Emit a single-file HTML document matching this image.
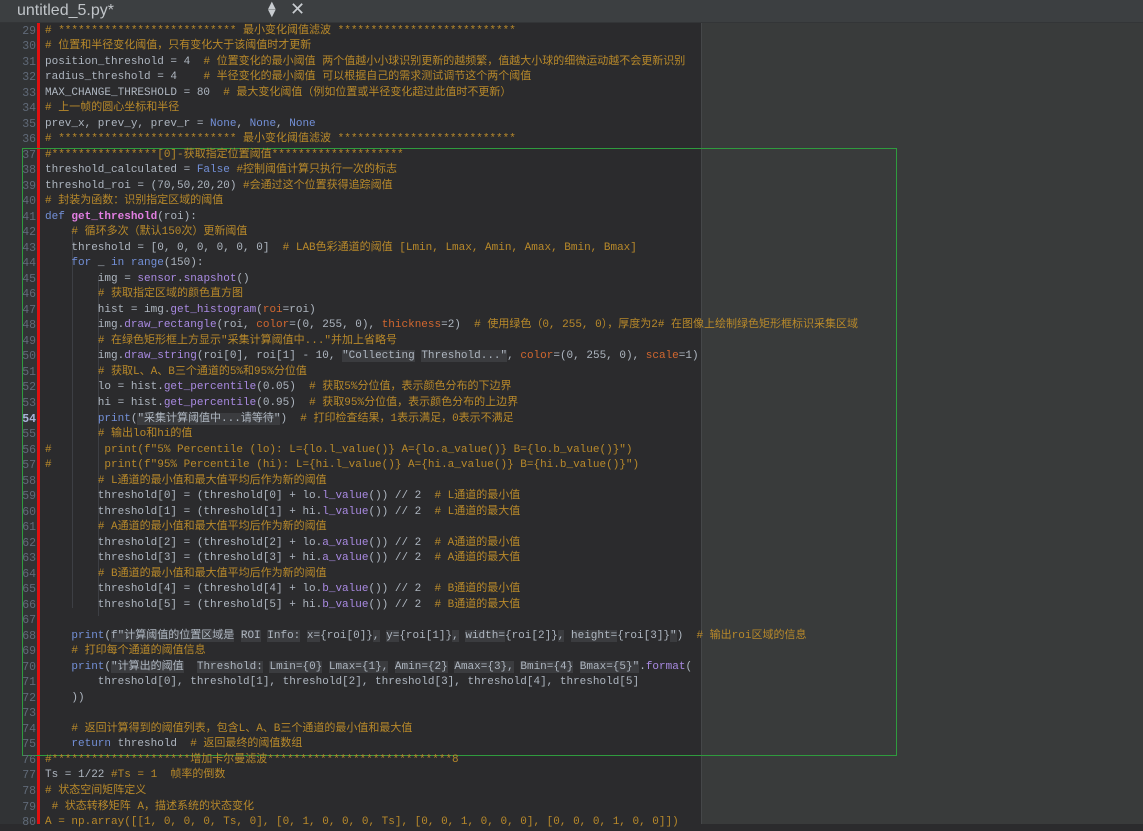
<!DOCTYPE html>
<html><head><meta charset="utf-8"><style>
body{margin:0;width:1143px;height:824px;overflow:hidden;background:#2b2b2d;font-family:"Liberation Mono","Noto Sans CJK SC",monospace;}
#top{position:absolute;left:0;top:0;width:1143px;height:22px;background:#3c3f41;border-bottom:1px solid #333537;}
#title{position:absolute;left:17px;top:0px;font:16px "Liberation Sans",sans-serif;color:#c0c4c8;line-height:22px;}
#gutter{position:absolute;left:0;top:23px;width:38px;height:801px;background:#313335;}
#red{position:absolute;left:37px;top:23px;width:3px;height:801px;background:#e01010;}
#rm{position:absolute;left:701px;top:23px;width:442px;height:801px;background:#393b3b;border-left:1px solid #454749;}
#green{position:absolute;left:22px;top:148px;width:873px;height:606px;border:1px solid #2f9b3e;}
.ln{position:absolute;left:0;width:36px;text-align:right;font-size:11.5px;color:#606a78;}
.cl{position:absolute;left:45px;font-size:11px;white-space:pre;color:#aeb6c0;}
.c{color:#b8892a}.k{color:#7390d8}.f{color:#e27fe2;font-weight:bold}.m{color:#a98ae2}.a{color:#d2672f}.s{background:#3b3c3f}
.g{position:absolute;width:1px;background:#3d3f44;}
</style></head><body>
<div id="top"><div id="title">untitled_5.py*</div>
<div style="position:absolute;left:268px;top:2px;color:#c8ccd0;font:10px 'DejaVu Sans',sans-serif;line-height:8px">▲<br>▼</div>
<div style="position:absolute;left:290px;top:0;color:#c8ccd0;font:18px 'DejaVu Sans',sans-serif;line-height:20px">✕</div></div>
<div id="gutter"></div>
<div id="rm"></div>
<div id="red"></div>
<div class="g" style="left:72px;top:228px;height:380px"></div>
<div class="g" style="left:98px;top:276px;height:340px"></div>
<div id="green"></div>
<div id="code"></div>
<script>
const L=[
'<span class=c># *************************** 最小变化阈值滤波 ***************************</span>',
'<span class=c># 位置和半径变化阈值，只有变化大于该阈值时才更新</span>',
'position_threshold = 4  <span class=c># 位置变化的最小阈值 两个值越小小球识别更新的越频繁，值越大小球的细微运动越不会更新识别</span>',
'radius_threshold = 4    <span class=c># 半径变化的最小阈值 可以根据自己的需求测试调节这个两个阈值</span>',
'MAX_CHANGE_THRESHOLD = 80  <span class=c># 最大变化阈值（例如位置或半径变化超过此值时不更新）</span>',
'<span class=c># 上一帧的圆心坐标和半径</span>',
'prev_x, prev_y, prev_r = <span class=k>None</span>, <span class=k>None</span>, <span class=k>None</span>',
'<span class=c># *************************** 最小变化阈值滤波 ***************************</span>',
'<span class=c>#****************[0]-获取指定位置阈值********************</span>',
'threshold_calculated = <span class=k>False</span> <span class=c>#控制阈值计算只执行一次的标志</span>',
'threshold_roi = (70,50,20,20) <span class=c>#会通过这个位置获得追踪阈值</span>',
'<span class=c># 封装为函数：识别指定区域的阈值</span>',
'<span class=k>def</span> <span class=f>get_threshold</span>(roi):',
'    <span class=c># 循环多次（默认150次）更新阈值</span>',
'    threshold = [0, 0, 0, 0, 0, 0]  <span class=c># LAB色彩通道的阈值 [Lmin, Lmax, Amin, Amax, Bmin, Bmax]</span>',
'    <span class=k>for</span> _ <span class=k>in</span> <span class=k>range</span>(150):',
'        img = <span class=m>sensor</span>.<span class=m>snapshot</span>()',
'        <span class=c># 获取指定区域的颜色直方图</span>',
'        hist = img.<span class=m>get_histogram</span>(<span class=a>roi</span>=roi)',
'        img.<span class=m>draw_rectangle</span>(roi, <span class=a>color</span>=(0, 255, 0), <span class=a>thickness</span>=2)  <span class=c># 使用绿色（0, 255, 0），厚度为2# 在图像上绘制绿色矩形框标识采集区域</span>',
'        <span class=c># 在绿色矩形框上方显示"采集计算阈值中..."并加上省略号</span>',
'        img.<span class=m>draw_string</span>(roi[0], roi[1] - 10, <span class=s>"Collecting</span> <span class=s>Threshold..."</span>, <span class=a>color</span>=(0, 255, 0), <span class=a>scale</span>=1)',
'        <span class=c># 获取L、A、B三个通道的5%和95%分位值</span>',
'        lo = hist.<span class=m>get_percentile</span>(0.05)  <span class=c># 获取5%分位值，表示颜色分布的下边界</span>',
'        hi = hist.<span class=m>get_percentile</span>(0.95)  <span class=c># 获取95%分位值，表示颜色分布的上边界</span>',
'        <span class=k>print</span>(<span class=s>"采集计算阈值中...请等待"</span>)  <span class=c># 打印检查结果，1表示满足，0表示不满足</span>',
'        <span class=c># 输出lo和hi的值</span>',
'<span class=c>#        print(f"5% Percentile (lo): L={lo.l_value()} A={lo.a_value()} B={lo.b_value()}")</span>',
'<span class=c>#        print(f"95% Percentile (hi): L={hi.l_value()} A={hi.a_value()} B={hi.b_value()}")</span>',
'        <span class=c># L通道的最小值和最大值平均后作为新的阈值</span>',
'        threshold[0] = (threshold[0] + lo.<span class=m>l_value</span>()) // 2  <span class=c># L通道的最小值</span>',
'        threshold[1] = (threshold[1] + hi.<span class=m>l_value</span>()) // 2  <span class=c># L通道的最大值</span>',
'        <span class=c># A通道的最小值和最大值平均后作为新的阈值</span>',
'        threshold[2] = (threshold[2] + lo.<span class=m>a_value</span>()) // 2  <span class=c># A通道的最小值</span>',
'        threshold[3] = (threshold[3] + hi.<span class=m>a_value</span>()) // 2  <span class=c># A通道的最大值</span>',
'        <span class=c># B通道的最小值和最大值平均后作为新的阈值</span>',
'        threshold[4] = (threshold[4] + lo.<span class=m>b_value</span>()) // 2  <span class=c># B通道的最小值</span>',
'        threshold[5] = (threshold[5] + hi.<span class=m>b_value</span>()) // 2  <span class=c># B通道的最大值</span>',
'',
'    <span class=k>print</span>(<span class=s>f"计算阈值的位置区域是</span> <span class=s>ROI</span> <span class=s>Info:</span> <span class=s>x=</span>{roi[0]}<span class=s>,</span> <span class=s>y=</span>{roi[1]}<span class=s>,</span> <span class=s>width=</span>{roi[2]}<span class=s>,</span> <span class=s>height=</span>{roi[3]}<span class=s>"</span>)  <span class=c># 输出roi区域的信息</span>',
'    <span class=c># 打印每个通道的阈值信息</span>',
'    <span class=k>print</span>(<span class=s>"计算出的阈值</span>  <span class=s>Threshold:</span> <span class=s>Lmin={0}</span> <span class=s>Lmax={1},</span> <span class=s>Amin={2}</span> <span class=s>Amax={3},</span> <span class=s>Bmin={4}</span> <span class=s>Bmax={5}"</span>.<span class=m>format</span>(',
'        threshold[0], threshold[1], threshold[2], threshold[3], threshold[4], threshold[5]',
'    ))',
'',
'    <span class=c># 返回计算得到的阈值列表，包含L、A、B三个通道的最小值和最大值</span>',
'    <span class=k>return</span> threshold  <span class=c># 返回最终的阈值数组</span>',
'<span class=c>#*********************增加卡尔曼滤波****************************8</span>',
'Ts = 1/22 <span class=c>#Ts = 1  帧率的倒数</span>',
'<span class=c># 状态空间矩阵定义</span>',
' <span class=c># 状态转移矩阵 A，描述系统的状态变化</span>',
'<span class=c>A = np.array([[1, 0, 0, 0, Ts, 0], [0, 1, 0, 0, 0, Ts], [0, 0, 1, 0, 0, 0], [0, 0, 0, 1, 0, 0]])</span>'
];
let h='';
L.forEach((t,i)=>{const y=23.5+i*15.52;const n=29+i;
h+=`<div class="ln" style="top:${y}px;line-height:15.5px;${n==54?'color:#a8b4d8;font-weight:bold':''}">${n}</div><div class="cl" style="top:${y}px;line-height:15.5px">${t}</div>`;});
document.getElementById('code').innerHTML=h;
</script>
</body></html>
